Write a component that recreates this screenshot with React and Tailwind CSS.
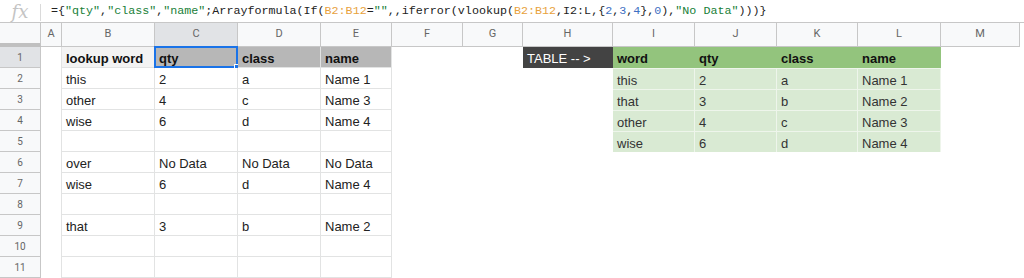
import React from 'react';

const COLS = ['A', 'B', 'C', 'D', 'E', 'F', 'G', 'H', 'I', 'J', 'K', 'L', 'M'];

const left = {
  1: ['lookup word', 'qty', 'class', 'name'],
  2: ['this', '2', 'a', 'Name 1'],
  3: ['other', '4', 'c', 'Name 3'],
  4: ['wise', '6', 'd', 'Name 4'],
  6: ['over', 'No Data', 'No Data', 'No Data'],
  7: ['wise', '6', 'd', 'Name 4'],
  9: ['that', '3', 'b', 'Name 2'],
};

const right = {
  1: ['word', 'qty', 'class', 'name'],
  2: ['this', '2', 'a', 'Name 1'],
  3: ['that', '3', 'b', 'Name 2'],
  4: ['other', '4', 'c', 'Name 3'],
  5: ['wise', '6', 'd', 'Name 4'],
};

const G = 'text-[#188038]';
const O = 'text-[#e8a23d]';
const B = 'text-[#3d6fc2]';

const formula = [
  ['={', ''], ['"qty"', G], [',', ''], ['"class"', G], [',', ''], ['"name"', G],
  [';Arrayformula(If(', ''], ['B2:B12', O], ['=', ''], ['""', G], [',,iferror(vlookup(', ''],
  ['B2:B12', O], [',I2:L,{', ''], ['2', B], [',', ''], ['3', B], [',', ''], ['4', B],
  ['},', ''], ['0', B], ['),', ''], ['"No Data"', G], [')))}', ''],
];

function Cell({ row, col }) {
  // col: 0 = A ... 12 = M
  if (col >= 1 && col <= 4) {
    const text = left[row]?.[col - 1];
    let bg = 'bg-white';
    if (row === 1 && col === 1) bg = 'bg-[#f3f3f3]';
    if (row === 1 && col > 1) bg = 'bg-[#b7b7b7]';
    return (
      <div className={`relative flex items-center pl-[4px] pt-[3px] border-r border-b border-[#e2e3e3] ${bg} ${row === 1 ? 'font-bold text-[#111]' : 'text-[#222]'}`}>
        <span className="whitespace-nowrap">{text}</span>
        {row === 1 && col === 2 && (
          <>
            <div className="absolute -inset-[1px] border-2 border-[#1a73e8]" />
            <div className="absolute -right-[4px] -bottom-[4px] w-[7px] h-[7px] bg-[#1a73e8] border border-white" />
          </>
        )}
      </div>
    );
  }
  if (col === 0) {
    return <div className="border-r border-[#e2e3e3] bg-white" />;
  }
  if (col === 7 && row === 1) {
    return (
      <div className="flex items-center pl-[4px] pt-[3px] bg-[#434343] text-white whitespace-nowrap">
        TABLE -- &gt;
      </div>
    );
  }
  if (col >= 8 && col <= 11 && row <= 5) {
    const text = right[row][col - 8];
    if (row === 1) {
      return (
        <div className="flex items-center pl-[4px] pt-[3px] bg-[#93c47d] font-bold text-[#111]">
          {text}
        </div>
      );
    }
    return (
      <div className="flex items-center pl-[4px] pt-[3px] bg-[#d9ead3] border-r border-t border-[#eef5eb] text-[#333] whitespace-nowrap">
        {text}
      </div>
    );
  }
  return <div className="bg-white" />;
}

export default function App() {
  const rows = Array.from({ length: 11 }, (_, i) => i + 1);
  return (
    <div className="w-[1024px] h-[278px] overflow-hidden bg-white" style={{ fontFamily: '"Liberation Sans", Arial, sans-serif' }}>
      {/* formula bar */}
      <div className="flex h-[23px] items-center pt-[2px] border-b border-[#c7c7c7]">
        <div className="w-[41px] h-[17px] flex items-center justify-center border-r border-[#dadada]">
          <span className="italic text-[18px] leading-none text-[#c4c4c4]" style={{ fontFamily: '"DejaVu Serif", serif' }}>
            fx
          </span>
        </div>
        <div className="pl-[10px] text-[11.7px] text-[#222] whitespace-nowrap" style={{ fontFamily: '"Liberation Mono", monospace' }}>
          {formula.map(([t, c], i) => (
            <span key={i} className={c}>{t}</span>
          ))}
        </div>
      </div>

      {/* sheet */}
      <div className="grid grid-cols-[41px_21px_93px_83px_83px_71px_71px_60px_90px_82px_82px_81px_83px_79px_1fr] grid-rows-[24px_repeat(11,21px)] text-[13px]">
        <div className="bg-[#f8f9fa] border-r border-[#c7c7c7] border-b-4 border-b-[#c0c0c0]" />
        {COLS.map((c, i) => (
          <div
            key={c}
            className={`flex items-center justify-center border-r border-b border-[#c7c7c7] text-[11px] text-[#666] ${i === 2 ? 'bg-[#e1e3e6]' : 'bg-[#f8f9fa]'}`}
            style={{ fontFamily: 'Roboto, Arial, sans-serif' }}
          >
            {c}
          </div>
        ))}
        <div className="bg-white" />

        {rows.map((r) => (
          <React.Fragment key={r}>
            <div
              className={`flex items-center justify-center border-r border-b border-[#c7c7c7] text-[10px] text-[#666] ${r === 1 ? 'bg-[#e1e3e6]' : 'bg-[#f8f9fa]'}`}
              style={{ fontFamily: 'Roboto, Arial, sans-serif' }}
            >
              {r}
            </div>
            {COLS.map((c, i) => (
              <Cell key={c} row={r} col={i} />
            ))}
            <div className="bg-white" />
          </React.Fragment>
        ))}
      </div>
    </div>
  );
}
